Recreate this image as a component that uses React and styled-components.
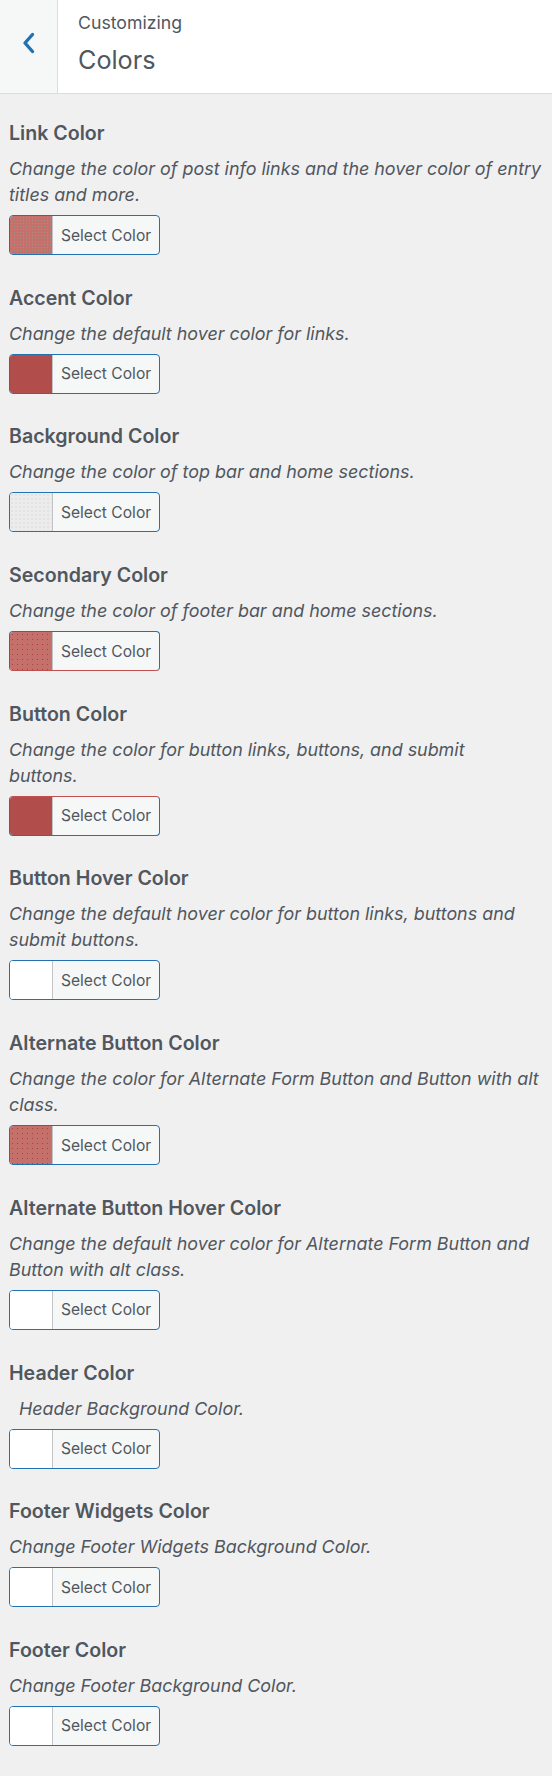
import React from 'react';
import styled, { createGlobalStyle } from 'styled-components';

const textColor = '#50575e';
const blue = '#2271b1';

const GlobalStyle = createGlobalStyle`
    body {
        margin: 0;
        background: #f0f0f1;
        font-family: Inter, "Liberation Sans", Arial, sans-serif;
        color: ${textColor};
    }
`;

const Panel = styled.div`
    width: 552px;
    min-height: 1776px;
    background: #f0f0f1;
`;

const Header = styled.header`
    display: flex;
    background: #fff;
    border-bottom: 1px solid #dcdcde;
`;

const BackButton = styled.button`
    display: flex;
    justify-content: center;
    align-items: flex-start;
    width: 58px;
    padding: 32px 0 0;
    border: none;
    border-right: 1px solid #dcdcde;
    background: #f6f7f7;
    color: ${blue};
    cursor: pointer;
`;

const TitleBlock = styled.div`
    display: flex;
    flex-direction: column;
    gap: 11px;
    padding: 13px 20px 17px;
`;

const Crumb = styled.span`
    font-size: 17.7px;
    line-height: 20px;
`;

const Title = styled.h1`
    margin: 0;
    font-size: 25.2px;
    font-weight: 400;
    line-height: 32px;
`;

const Content = styled.div`
    padding: 27px 10px 0 9px;
`;

const Section = styled.section`
    margin-bottom: 30.7px;
`;

const Heading = styled.h3`
    margin: 0 0 11px;
    font-size: 19.6px;
    font-weight: 600;
    line-height: 24px;
`;

const Description = styled.p`
    margin: 0 0 7px;
    padding-left: ${(p) => (p.$indent ? '10px' : '0')};
    font-size: 17.9px;
    font-style: italic;
    line-height: 26px;
    white-space: pre-line;
`;

const swatchFills = {
    link: `
        background-color: #c4716b;
        background-image: radial-gradient(circle, rgba(140, 160, 150, 0.7) 0.6px, transparent 0.9px);
        background-size: 3px 3px;
    `,
    dotted: `
        background-color: #c4716c;
        background-image: radial-gradient(circle, rgba(170, 50, 50, 0.8) 0.6px, transparent 0.9px);
        background-size: 5px 5px;
    `,
    solid: `
        background-color: #b14e4b;
    `,
    light: `
        background-color: #ececec;
        background-image: radial-gradient(circle, rgba(205, 205, 205, 0.5) 0.6px, transparent 0.9px);
        background-size: 4px 4px;
    `,
    white: `
        background-color: #fff;
    `,
};

const ColorButton = styled.button`
    display: flex;
    align-items: stretch;
    width: 151px;
    height: 40px;
    padding: 0;
    border: 1px solid ${blue};
    border-radius: 4px;
    overflow: hidden;
    background: #f6f7f7;
    cursor: pointer;
    ${(p) => (p.$edge ? `border-${p.$edge}-color: #c0504d;` : '')}
`;

const Swatch = styled.span`
    width: 42px;
    flex-shrink: 0;
    border-right: 1px solid #c3c4c7;
    ${(p) => swatchFills[p.$fill]}
`;

const ButtonLabel = styled.span`
    display: flex;
    align-items: center;
    padding: 0 8px;
    font-family: Inter, "Liberation Sans", Arial, sans-serif;
    font-size: 15.6px;
    color: ${textColor};
    white-space: nowrap;
`;

const ChevronLeft = () => (
    <svg width="14" height="22" viewBox="0 0 14 22" fill="none">
        <path d="M10.5 2.5 L3 11 L10.5 19.5" stroke="currentColor" strokeWidth="3.4" strokeLinecap="round" strokeLinejoin="round" />
    </svg>
);

const settings = [
    {
        title: 'Link Color',
        text: 'Change the color of post info links and the hover color of entry\ntitles and more.',
        fill: 'link',
    },
    { title: 'Accent Color', text: 'Change the default hover color for links.', fill: 'solid' },
    { title: 'Background Color', text: 'Change the color of top bar and home sections.', fill: 'light' },
    {
        title: 'Secondary Color',
        text: 'Change the color of footer bar and home sections.',
        fill: 'dotted',
        edge: 'bottom',
    },
    {
        title: 'Button Color',
        text: 'Change the color for button links, buttons, and submit\nbuttons.',
        fill: 'solid',
        edge: 'top',
    },
    {
        title: 'Button Hover Color',
        text: 'Change the default hover color for button links, buttons and\nsubmit buttons.',
        fill: 'white',
    },
    {
        title: 'Alternate Button Color',
        text: 'Change the color for Alternate Form Button and Button with alt\nclass.',
        fill: 'dotted',
    },
    {
        title: 'Alternate Button Hover Color',
        text: 'Change the default hover color for Alternate Form Button and\nButton with alt class.',
        fill: 'white',
    },
    { title: 'Header Color', text: 'Header Background Color.', fill: 'white', indent: true },
    { title: 'Footer Widgets Color', text: 'Change Footer Widgets Background Color.', fill: 'white' },
    { title: 'Footer Color', text: 'Change Footer Background Color.', fill: 'white' },
];

const App = () => {
    return (
        <Panel>
            <GlobalStyle />
            <Header>
                <BackButton aria-label="Back">
                    <ChevronLeft />
                </BackButton>
                <TitleBlock>
                    <Crumb>Customizing</Crumb>
                    <Title>Colors</Title>
                </TitleBlock>
            </Header>
            <Content>
                {settings.map((item) => (
                    <Section key={item.title}>
                        <Heading>{item.title}</Heading>
                        <Description $indent={item.indent}>{item.text}</Description>
                        <ColorButton $edge={item.edge}>
                            <Swatch $fill={item.fill} />
                            <ButtonLabel>Select Color</ButtonLabel>
                        </ColorButton>
                    </Section>
                ))}
            </Content>
        </Panel>
    );
};

export default App;
